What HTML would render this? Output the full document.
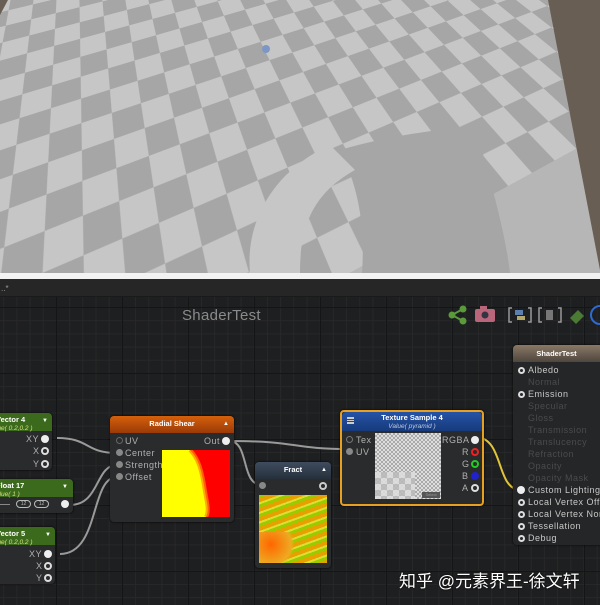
<!DOCTYPE html>
<html><head><meta charset="utf-8"><style>
*{margin:0;padding:0;box-sizing:border-box}
body{width:600px;height:605px;overflow:hidden;background:#1f2021;font-family:"Liberation Sans","Noto Sans CJK SC",sans-serif;position:relative}
.abs{position:absolute}
#view{left:0;top:0;width:600px;height:273px;overflow:hidden;background:#b6b6b6}
#graph{left:0;top:297px;width:600px;height:308px;background-color:#1e1f20;
background-image:linear-gradient(#141516 1px,transparent 1px),linear-gradient(90deg,#141516 1px,transparent 1px),linear-gradient(#272829 1px,transparent 1px),linear-gradient(90deg,#272829 1px,transparent 1px);
background-size:66px 66px,66px 66px,13.2px 13.2px,13.2px 13.2px;background-position:-10px 10px,-10px 10px,-10px 10px,-10px 10px}
.node{position:absolute;background:#2a2b2c;border-radius:4px;box-shadow:0 0 2px #000;color:#aaa;font-size:9px}
.hd{height:18px;border-radius:4px 4px 0 0;color:#fff;font-weight:bold;font-size:7.5px;text-align:center;padding-top:3px;line-height:8px}
.sub{font-style:italic;font-weight:normal;font-size:6.5px;color:#cde07a}
.pt{position:absolute;font-size:9px;color:#b0b0b0;letter-spacing:.5px;line-height:10px}
.c{position:absolute;width:8px;height:8px;border-radius:50%;border:2px solid #ddd}
.f{position:absolute;width:8px;height:8px;border-radius:50%;background:#eee}
.g{position:absolute;width:7px;height:7px;border-radius:50%;background:#888}
.o{position:absolute;width:7px;height:7px;border-radius:50%;border:1px solid #666}
.out{position:absolute;left:7px;font-size:9px;color:#c8c8c8;letter-spacing:.5px;line-height:10px}
.dim{color:#4a4b4c}
</style></head><body>
<div id="view" class="abs">
 <div class="abs" style="left:0;top:0;width:600px;height:273px;perspective:450px;perspective-origin:45% -160px">
  <div class="abs" style="left:-1500px;top:-2700px;width:3600px;height:3000px;transform-origin:50% 100%;transform:rotateX(68deg) rotateZ(-22deg);background:repeating-conic-gradient(#a6a6a6 0 25%,#c6c6c6 0 50%) 0 0/80px 80px"></div>
 </div>
 <svg class="abs" style="left:0;top:0" width="600" height="273">
  <path d="M340 150 C390 135 440 130 475 125 C490 180 505 230 510 273 L362 273 C365 230 360 190 340 150Z" fill="#a6a6a6"/>
  <path d="M250 273 C245 220 275 170 330 145 L355 170 C310 195 300 230 300 273Z" fill="#c6c6c6"/>
  <polygon points="548,0 600,0 600,270" fill="#685e54"/>
  <polygon points="0,0 8,0 0,15" fill="#685e54"/>
  <circle cx="266" cy="49" r="4" fill="#7d97c4"/>
 </svg>
</div>
<div class="abs" style="left:0;top:273px;width:600px;height:6px;background:#f2f2f2"></div>
<div class="abs" style="left:0;top:279px;width:600px;height:18px;background:#262626;border-bottom:1px solid #1a1a1a"></div>
<div class="abs" style="left:1px;top:284px;color:#999;font-size:8px">..*</div>
<div id="graph" class="abs"></div>
<div class="abs" style="left:182px;top:307px;color:#8b8b8b;font-size:15px;letter-spacing:.3px">ShaderTest</div>
<svg class="abs" style="left:440px;top:300px" width="160" height="30">
 <g stroke="#5a9a3a" stroke-width="2" fill="#5a9a3a"><line x1="12" y1="15" x2="23" y2="9"/><line x1="12" y1="15" x2="23" y2="21"/><circle cx="12" cy="15" r="2.5"/><circle cx="23" cy="9" r="2.5"/><circle cx="23" cy="21" r="2.5"/></g>
 <rect x="35" y="9" width="20" height="13" rx="2" fill="#b9667a"/><rect x="40" y="6" width="7" height="4" fill="#b9667a"/><circle cx="45" cy="15" r="3.5" fill="#334"/>
 <g fill="none" stroke="#999" stroke-width="1.5"><path d="M72 8h-3v14h3M88 8h3v14h-3M102 8h-3v14h3M118 8h3v14h-3"/></g>
 <rect x="75" y="10" width="8" height="5" fill="#5b7fb0"/><rect x="77" y="16" width="8" height="4" fill="#b5a76a"/>
 <rect x="106" y="10" width="7" height="10" fill="#777"/>
 <path d="M130 18 l8 -8 l6 6 l-8 8z" fill="#4a7a34"/>
 <circle cx="160" cy="15" r="9" fill="none" stroke="#2d6ad0" stroke-width="2"/>
</svg>
<svg class="abs" style="left:0;top:0" width="600" height="605">
 <g fill="none" stroke="#9a9a9a" stroke-width="2">
  <path d="M57 438 C90 438 85 453 117 453"/>
  <path d="M70 505 C100 505 95 465 117 465"/>
  <path d="M60 554 C100 554 90 477 117 477"/>
  <path d="M229 441 C300 441 290 449 349 449"/>
  <path d="M229 441 C250 441 240 485 262 485"/>
 </g>
 <path d="M475 437 C505 437 495 490 521 490" fill="none" stroke="#e0c43a" stroke-width="2"/>
</svg>
<div class="node" style="left:-10px;top:413px;width:62px;height:57px">
 <div class="hd" style="background:#3c6a1c;text-align:left;padding-left:6px">Vector 4<br><span class="sub">lue( 0.2,0.2 )</span></div>
 <div class="abs" style="left:52px;top:5px;color:#fff;font-size:6px">▼</div>
 <div class="pt" style="left:36px;top:21px">XY</div><div class="f" style="left:51px;top:22px"></div>
 <div class="pt" style="left:43px;top:33px">X</div><div class="c" style="left:51px;top:34px"></div>
 <div class="pt" style="left:43px;top:46px">Y</div><div class="c" style="left:51px;top:47px"></div>
</div>
<div class="node" style="left:-10px;top:479px;width:83px;height:34px">
 <div class="hd" style="background:#3c6a1c;text-align:left;padding-left:6px">Float 17<br><span class="sub">alue( 1 )</span></div>
 <div class="abs" style="left:72px;top:5px;color:#fff;font-size:6px">▼</div>
 <div class="abs" style="left:8px;top:25px;width:12px;height:1px;background:#888"></div>
 <div class="abs" style="left:26px;top:21px;width:15px;height:8px;border:1px solid #bbb;border-radius:4px;font-size:5px;color:#bbb;text-align:center;line-height:6px">12</div>
 <div class="abs" style="left:44px;top:21px;width:15px;height:8px;border:1px solid #bbb;border-radius:4px;font-size:5px;color:#bbb;text-align:center;line-height:6px">12</div>
 <div class="f" style="left:71px;top:21px"></div>
</div>
<div class="node" style="left:-10px;top:527px;width:65px;height:57px">
 <div class="hd" style="background:#3c6a1c;text-align:left;padding-left:6px">Vector 5<br><span class="sub">lue( 0.2,0.2 )</span></div>
 <div class="abs" style="left:55px;top:5px;color:#fff;font-size:6px">▼</div>
 <div class="pt" style="left:39px;top:22px">XY</div><div class="f" style="left:54px;top:23px"></div>
 <div class="pt" style="left:46px;top:34px">X</div><div class="c" style="left:54px;top:35px"></div>
 <div class="pt" style="left:46px;top:46px">Y</div><div class="c" style="left:54px;top:47px"></div>
</div>
<div class="node" style="left:110px;top:416px;width:124px;height:106px">
 <div class="hd" style="background:linear-gradient(#d4600a,#9a3a08);height:17px;padding-top:4px">Radial Shear</div>
 <div class="abs" style="left:113px;top:5px;color:#fff;font-size:6px">▲</div>
 <div class="o" style="left:6px;top:21px"></div><div class="pt" style="left:15px;top:20px">UV</div>
 <div class="g" style="left:6px;top:33px"></div><div class="pt" style="left:15px;top:32px">Center</div>
 <div class="g" style="left:6px;top:45px"></div><div class="pt" style="left:15px;top:44px">Strength</div>
 <div class="g" style="left:6px;top:57px"></div><div class="pt" style="left:15px;top:56px">Offset</div>
 <div class="pt" style="left:94px;top:20px">Out</div><div class="f" style="left:112px;top:21px"></div>
 <svg class="abs" style="left:52px;top:34px" width="68" height="67"><rect width="68" height="67" fill="#f00"/><path d="M0 0 H28 C38 10 40 25 42 35 C44 50 48 60 44 67 H0Z" fill="#ff0"/><path d="M28 0 C38 10 40 25 42 35 C44 50 48 60 44 67" stroke="#f80" stroke-width="4" fill="none" opacity=".7"/></svg>
</div>
<div class="node" style="left:255px;top:462px;width:76px;height:106px">
 <div class="hd" style="background:linear-gradient(#3e4c5e,#26303c);height:17px;padding-top:4px">Fract</div>
 <div class="abs" style="left:66px;top:5px;color:#fff;font-size:6px">▲</div>
 <div class="g" style="left:4px;top:20px"></div><div class="c" style="left:64px;top:20px;border-color:#ccc"></div>
 <div class="abs" style="left:4px;top:33px;width:68px;height:68px;background:repeating-linear-gradient(160deg,#9c0 0 3px,#e8a000 3px 7px,#dd3 7px 9px)"></div>
 <div class="abs" style="left:4px;top:70px;width:40px;height:31px;background:radial-gradient(circle at 30% 40%,#f60,#ea2 60%,transparent 70%)"></div>
</div>
<div class="node" style="left:340px;top:410px;width:144px;height:96px;border:2px solid #e8a020;background:#2a2b2c">
 <div class="hd" style="background:linear-gradient(#2553a6,#173a7c);height:19px;padding-top:2px">Texture Sample 4<br><span class="sub" style="color:#bcd">Value( pyramid )</span></div>
 <div class="abs" style="left:5px;top:5px;width:7px;height:7px;border-top:2px solid #ccc;border-bottom:2px solid #ccc"><div style="margin-top:1px;height:1px;background:#ccc"></div></div>
 <div class="o" style="left:4px;top:24px;border-color:#777"></div><div class="pt" style="left:14px;top:23px">Tex</div>
 <div class="g" style="left:4px;top:36px"></div><div class="pt" style="left:14px;top:35px">UV</div>
 <div class="abs" style="left:33px;top:21px;width:66px;height:66px;background:repeating-conic-gradient(#aaa 0 25%,#ddd 0 50%) 0 0/4px 4px"></div>
 <div class="abs" style="left:33px;top:60px;width:40px;height:27px;background:repeating-conic-gradient(#bbb 0 25%,#ddd 0 50%) 0 0/12px 12px;opacity:.9"></div>
 <div class="abs" style="left:80px;top:80px;width:18px;height:6px;background:#555;font-size:4px;color:#999;text-align:center">Select</div>
 <div class="pt" style="left:100px;top:23px">RGBA</div><div class="f" style="left:129px;top:24px"></div>
 <div class="pt" style="left:120px;top:35px">R</div><div class="c" style="left:129px;top:36px;border-color:#e22"></div>
 <div class="pt" style="left:120px;top:47px">G</div><div class="c" style="left:129px;top:48px;border-color:#2c2"></div>
 <div class="pt" style="left:120px;top:59px">B</div><div class="abs" style="left:129px;top:60px;width:8px;height:8px;border-radius:50%;background:#22c"></div>
 <div class="pt" style="left:120px;top:71px">A</div><div class="c" style="left:129px;top:72px"></div>
</div>
<div class="node" style="left:513px;top:345px;width:95px;height:200px;background:#252627">
 <div class="hd" style="background:linear-gradient(#8a7866,#4e463e);height:17px;padding-top:5px;padding-right:8px">ShaderTest</div>
 <div class="c" style="left:5px;top:22px;width:7px;height:7px"></div><div class="out" style="left:15px;top:20px">Albedo</div>
 <div class="out dim" style="left:15px;top:32px">Normal</div>
 <div class="c" style="left:5px;top:46px;width:7px;height:7px"></div><div class="out" style="left:15px;top:44px">Emission</div>
 <div class="out dim" style="left:15px;top:56px">Specular</div>
 <div class="out dim" style="left:15px;top:68px">Gloss</div>
 <div class="out dim" style="left:15px;top:80px">Transmission</div>
 <div class="out dim" style="left:15px;top:92px">Translucency</div>
 <div class="out dim" style="left:15px;top:104px">Refraction</div>
 <div class="out dim" style="left:15px;top:116px">Opacity</div>
 <div class="out dim" style="left:15px;top:128px">Opacity Mask</div>
 <div class="f" style="left:4px;top:141px"></div><div class="out" style="left:15px;top:140px">Custom Lighting</div>
 <div class="c" style="left:5px;top:154px;width:7px;height:7px"></div><div class="out" style="left:15px;top:152px;white-space:nowrap">Local Vertex Offset</div>
 <div class="c" style="left:5px;top:166px;width:7px;height:7px"></div><div class="out" style="left:15px;top:164px;white-space:nowrap">Local Vertex Normal</div>
 <div class="c" style="left:5px;top:178px;width:7px;height:7px"></div><div class="out" style="left:15px;top:176px">Tessellation</div>
 <div class="c" style="left:5px;top:190px;width:7px;height:7px"></div><div class="out" style="left:15px;top:188px">Debug</div>
</div>
<div class="abs" style="left:399px;top:567px;color:#fff;font-size:17px;white-space:nowrap;text-shadow:0 0 2px #000">知乎 @元素界王-徐文轩</div>
</body></html>
